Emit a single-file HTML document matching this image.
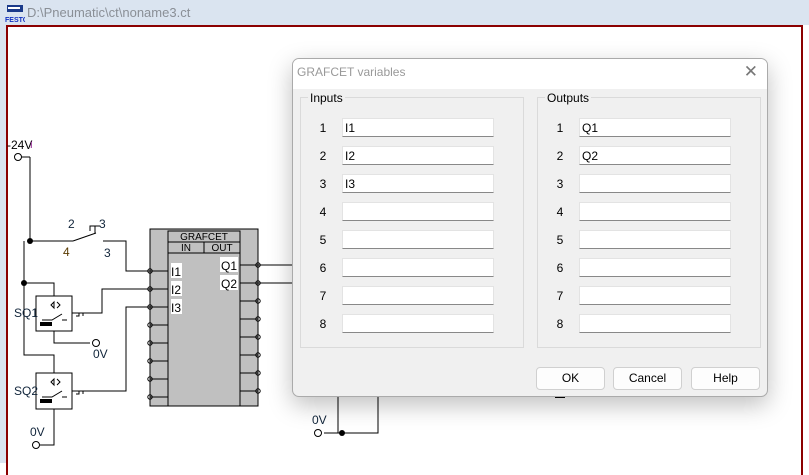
<!DOCTYPE html>
<html><head><meta charset="utf-8"><style>
*{margin:0;padding:0;box-sizing:border-box}
body{width:809px;height:463px;overflow:hidden;background:#fff;font-family:"Liberation Sans",sans-serif;position:relative}
.tb{position:absolute;left:0;top:0;width:809px;height:25px;background:#dae4f0;}
.tb span{position:absolute;left:27px;top:5px;font-size:13px;color:#8a8f96}
.canvas{position:absolute;left:6px;top:25px;width:797px;height:450px;border:2px solid #8b0000;border-bottom:none;background:#fff}
.lstrip{position:absolute;left:0;top:25px;width:6px;height:438px;background:#dae4f0}
.dlg{position:absolute;left:292px;top:58px;width:476px;height:339px;background:#f0f0f0;border:1px solid #aaa;border-radius:7px;box-shadow:0 8px 24px rgba(0,0,0,.25);overflow:hidden}
.dt{height:30px;background:#fff;font-size:12px;color:#999;padding:6px 0 0 4px}
.x{position:absolute;right:9px;top:3px;font-size:17px;color:#777}
.grp{position:absolute;border:1px solid #dadada;height:251px;top:38px;width:224px}
.grp .lg{position:absolute;left:7px;top:-7px;background:#f0f0f0;font-size:12px;padding:0 2px;color:#000}
.row{position:absolute;font-size:12px}
.row b{font-weight:normal;position:absolute;left:0;top:3px;width:12px;text-align:center}
.row i{font-style:normal;position:absolute;left:25px;top:0;width:152px;height:19px;background:#fff;border:1px solid #e3e3e3;border-bottom:1px solid #888;padding:2px 0 0 2px}
.btn{position:absolute;top:308px;height:23px;width:69px;background:#fdfdfd;border:1px solid #d0d0d0;border-radius:4px;font-size:12px;text-align:center;line-height:21px}
</style></head><body>
<div class="tb"><svg width="20" height="20" style="position:absolute;left:5px;top:3px"><rect x="2" y="2" width="16" height="7" fill="#1a3a8a"/><rect x="3" y="4" width="12" height="2" fill="#fff"/><text x="0" y="19" font-size="7" fill="#1030c0" font-weight="bold" font-family="Liberation Sans">FESTO</text></svg><span>D:\Pneumatic\ct\noname3.ct</span></div>
<div class="lstrip"></div>
<div class="canvas"></div>
<svg width="809" height="463" style="position:absolute;left:0;top:0" font-family="Liberation Sans" font-size="11">
<g stroke="#000" fill="none" stroke-width="1">
<path d="M30 157V241M30 241H73M103 241H126V271H150M24 241V355H54V373M24 283H54V296M72 313H87M87 313H102V289H150M54 331V343H90M72 391H126V307H150M54 409V445H40M258 265H292M258 283H292M338 397V433H378V397M324 433H338M18 157H30"/>
<path d="M73 241L96 233M90 231V226H100M95 226V233"/>
<rect x="36" y="296" width="36" height="35"/><rect x="36" y="373" width="36" height="36"/>
<path d="M42 320H52L62 314M62 320H67M42 397H52L62 391M62 397H67M76 316H79V313H83V316M76 394H79V391H83V394"/>
<path d="M51 305L54 302V308ZM57 302L60 305L57 308M51 382L54 379V385ZM57 379L60 382L57 385"/>
<circle cx="18" cy="157" r="3.5" fill="#fff"/><circle cx="96" cy="343" r="3.5" fill="#fff"/><circle cx="36" cy="445" r="3.5" fill="#fff"/><circle cx="318" cy="433" r="3.5" fill="#fff"/>
</g>
<rect x="40" y="322" width="12" height="4" fill="#000"/><rect x="40" y="399" width="12" height="4" fill="#000"/>
<circle cx="30" cy="241" r="3" fill="#000"/><circle cx="24" cy="283" r="3" fill="#000"/><circle cx="342" cy="433" r="3" fill="#000"/>
<rect x="150" y="229" width="108" height="177" fill="#c0c0c0" stroke="#000"/>
<rect x="168" y="231" width="72" height="175" fill="#c0c0c0" stroke="#000"/>
<path d="M168 242H240M168 253H240M204 242V253" stroke="#000"/>
<text x="204" y="240" font-size="10" text-anchor="middle">GRAFCET</text>
<text x="186" y="251" font-size="10" text-anchor="middle">IN</text><text x="222" y="251" font-size="10" text-anchor="middle">OUT</text>
<g stroke="#000" fill="none"><path d="M150 271H168M150 289H168M150 307H168M150 325H168M150 343H168M150 361H168M150 379H168M150 397H168M240 265H258M240 283H258M240 301H258M240 319H258M240 337H258M240 355H258M240 373H258M240 391H258"/>
<g><circle cx="150" cy="271" r="2.2"/><circle cx="150" cy="289" r="2.2"/><circle cx="150" cy="307" r="2.2"/><circle cx="150" cy="325" r="2.2"/><circle cx="150" cy="343" r="2.2"/><circle cx="150" cy="361" r="2.2"/><circle cx="150" cy="379" r="2.2"/><circle cx="150" cy="397" r="2.2"/>
<circle cx="258" cy="265" r="2.2"/><circle cx="258" cy="283" r="2.2"/><circle cx="258" cy="301" r="2.2"/><circle cx="258" cy="319" r="2.2"/><circle cx="258" cy="337" r="2.2"/><circle cx="258" cy="355" r="2.2"/><circle cx="258" cy="373" r="2.2"/><circle cx="258" cy="391" r="2.2"/></g></g>
<rect x="171" y="263" width="11" height="15" fill="#fff"/><rect x="171" y="281" width="11" height="15" fill="#fff"/><rect x="171" y="299" width="11" height="15" fill="#fff"/>
<rect x="220" y="257" width="18" height="15" fill="#fff"/><rect x="220" y="275" width="18" height="15" fill="#fff"/>
<g font-size="12"><text x="171" y="276">I1</text><text x="171" y="294">I2</text><text x="171" y="312">I3</text><text x="221" y="270">Q1</text><text x="221" y="288">Q2</text></g>
<text x="7" y="149" fill="#000" font-size="12">-24V</text><text x="30" y="148" fill="#800080" font-size="9">I</text>
<g font-size="12"><text x="68" y="228" fill="#10243a">2</text><text x="99" y="228" fill="#10243a">3</text><text x="63" y="256" fill="#5a3a00">4</text><text x="104" y="257" fill="#10243a">3</text>
<text x="14" y="317" fill="#10243a">SQ1</text><text x="14" y="395" fill="#10243a">SQ2</text>
<text x="93" y="358" fill="#10243a">0V</text><text x="30" y="436" fill="#10243a">0V</text><text x="312" y="424" fill="#10243a">0V</text></g>
<rect x="555" y="395" width="10" height="3" fill="#000"/>
</svg>
<div class="dlg">
<div class="dt">GRAFCET variables</div><div class="x">✕</div>
<div class="grp" style="left:7px"><span class="lg">Inputs</span>
<div class="row" style="left:16px;top:20px"><b>1</b><i>I1</i></div>
<div class="row" style="left:16px;top:48px"><b>2</b><i>I2</i></div>
<div class="row" style="left:16px;top:76px"><b>3</b><i>I3</i></div>
<div class="row" style="left:16px;top:104px"><b>4</b><i></i></div>
<div class="row" style="left:16px;top:132px"><b>5</b><i></i></div>
<div class="row" style="left:16px;top:160px"><b>6</b><i></i></div>
<div class="row" style="left:16px;top:188px"><b>7</b><i></i></div>
<div class="row" style="left:16px;top:216px"><b>8</b><i></i></div>
</div>
<div class="grp" style="left:244px"><span class="lg">Outputs</span>
<div class="row" style="left:16px;top:20px"><b>1</b><i>Q1</i></div>
<div class="row" style="left:16px;top:48px"><b>2</b><i>Q2</i></div>
<div class="row" style="left:16px;top:76px"><b>3</b><i></i></div>
<div class="row" style="left:16px;top:104px"><b>4</b><i></i></div>
<div class="row" style="left:16px;top:132px"><b>5</b><i></i></div>
<div class="row" style="left:16px;top:160px"><b>6</b><i></i></div>
<div class="row" style="left:16px;top:188px"><b>7</b><i></i></div>
<div class="row" style="left:16px;top:216px"><b>8</b><i></i></div>
</div>
<div class="btn" style="left:243px">OK</div>
<div class="btn" style="left:320px">Cancel</div>
<div class="btn" style="left:398px">Help</div>
</div>
</body></html>
